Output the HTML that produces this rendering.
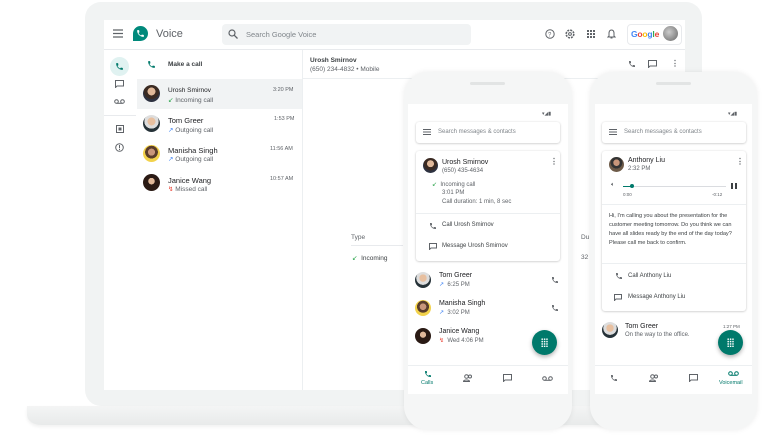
<!DOCTYPE html>
<html><head><meta charset="utf-8"><style>
*{box-sizing:border-box;margin:0;padding:0}
body{width:779px;height:444px;background:#fff;position:relative;overflow:hidden;font-family:"Liberation Sans",Arial,sans-serif;color:#202124}
.a{position:absolute}
.t{font-size:7px;color:#202124;white-space:nowrap}
.s{font-size:6px;color:#5f6368;white-space:nowrap}
.av{position:absolute;border-radius:50%;background:radial-gradient(circle at 50% 38%,#e0b899 0 28%,#3a2a22 30% 55%,#2d3140 57%)}
.ic{position:absolute}
.fab{position:absolute;width:25px;height:25px;border-radius:50%;background:#00796b;box-shadow:0 2px 4px rgba(0,0,0,.3)}
.fab:after{content:"";position:absolute;left:9px;top:8px;width:7px;height:9px;background:radial-gradient(circle,#fff 0.7px,transparent 1px) 0 0/2.4px 2.4px}
.card{position:absolute;background:#fff;border-radius:3px;box-shadow:0 0.5px 2px rgba(0,0,0,.25)}
</style></head><body>
<!-- laptop -->
<div class="a" style="left:85px;top:2px;width:617px;height:404px;background:#f1f3f3;border-radius:16px"></div>
<div class="a" style="left:27px;top:406px;width:700px;height:19px;background:linear-gradient(#f4f5f5,#e8eaea);border-radius:0 0 14px 14px/0 0 10px 10px;box-shadow:0 2px 3px rgba(0,0,0,.06)"></div>
<div class="a" style="left:104px;top:20px;width:581px;height:370px;background:#fff"></div>
<!-- header -->
<div class="a" style="left:104px;top:49px;width:581px;height:1px;background:#e8eaed"></div>
<svg class="ic" style="left:113px;top:29px" width="10" height="9"><path d="M0 1h10M0 4.5h10M0 8h10" stroke="#5f6368" stroke-width="1.3"/></svg>
<div class="a" style="left:133px;top:26px;width:15px;height:15px;border-radius:50% 50% 50% 0;background:#00897b;transform:rotate(0deg)"></div>
<svg class="ic" style="left:136px;top:29px" width="9" height="9" viewBox="0 0 24 24"><path fill="#fff" d="M6.6 10.8c1.4 2.8 3.8 5.1 6.6 6.6l2.2-2.2c.3-.3.7-.4 1-.2 1.1.4 2.3.6 3.6.6.6 0 1 .4 1 1V20c0 .6-.4 1-1 1C10.6 21 3 13.4 3 4c0-.6.4-1 1-1h3.5c.6 0 1 .4 1 1 0 1.3.2 2.5.6 3.6.1.3 0 .7-.2 1L6.6 10.8z"/></svg>
<div class="a" style="left:156px;top:28px;font-size:11px;color:#5f6368">Voice</div>
<div class="a" style="left:222px;top:24px;width:249px;height:21px;background:#f1f3f4;border-radius:4px"></div>
<svg class="ic" style="left:228px;top:29px" width="10" height="10"><circle cx="4" cy="4" r="3" fill="none" stroke="#5f6368" stroke-width="1.2"/><path d="M6.2 6.2L9.5 9.5" stroke="#5f6368" stroke-width="1.3"/></svg>
<div class="a" style="left:246px;top:30px;font-size:7.5px;color:#80868b">Search Google Voice</div>
<svg class="ic" style="left:545px;top:29px" width="10" height="10"><circle cx="5" cy="5" r="4.2" fill="none" stroke="#5f6368" stroke-width="1"/><text x="3" y="7.5" font-size="6" fill="#5f6368" font-family="Liberation Sans">?</text></svg>
<svg class="ic" style="left:565px;top:29px" width="10" height="10"><circle cx="5" cy="5" r="3.8" fill="none" stroke="#5f6368" stroke-width="1.6" stroke-dasharray="2 1"/><circle cx="5" cy="5" r="1.4" fill="none" stroke="#5f6368"/></svg>
<svg class="ic" style="left:587px;top:30px" width="8" height="8"><g fill="#5f6368"><rect x="0" y="0" width="2" height="2"/><rect x="3" y="0" width="2" height="2"/><rect x="6" y="0" width="2" height="2"/><rect x="0" y="3" width="2" height="2"/><rect x="3" y="3" width="2" height="2"/><rect x="6" y="3" width="2" height="2"/><rect x="0" y="6" width="2" height="2"/><rect x="3" y="6" width="2" height="2"/><rect x="6" y="6" width="2" height="2"/></g></svg>
<svg class="ic" style="left:607px;top:29px" width="9" height="10"><path d="M4.5 1C2.5 1 2 3 2 4.5V7L1 8h7L7 7V4.5C7 3 6.5 1 4.5 1z" fill="none" stroke="#5f6368"/><path d="M3.5 9h2" stroke="#5f6368"/></svg>
<div class="a" style="left:627px;top:24px;width:55px;height:21px;border:1px solid #e8eaed;border-radius:4px"></div>
<div class="a" style="left:631px;top:29px;font-size:8.5px;font-weight:bold;letter-spacing:-0.2px"><span style="color:#4285f4">G</span><span style="color:#ea4335">o</span><span style="color:#fbbc05">o</span><span style="color:#4285f4">g</span><span style="color:#34a853">l</span><span style="color:#ea4335">e</span></div>
<div class="a" style="left:663px;top:26px;width:15px;height:15px;border-radius:50%;background:radial-gradient(circle at 40% 40%,#ccc,#666)"></div>
<!-- rail -->
<div class="a" style="left:110px;top:57px;width:19px;height:19px;border-radius:50%;background:#e0f2f1"></div>
<svg class="ic" style="left:115px;top:62px" width="9" height="9" viewBox="0 0 24 24"><path fill="#00796b" d="M6.6 10.8c1.4 2.8 3.8 5.1 6.6 6.6l2.2-2.2c.3-.3.7-.4 1-.2 1.1.4 2.3.6 3.6.6.6 0 1 .4 1 1V20c0 .6-.4 1-1 1C10.6 21 3 13.4 3 4c0-.6.4-1 1-1h3.5c.6 0 1 .4 1 1 0 1.3.2 2.5.6 3.6.1.3 0 .7-.2 1L6.6 10.8z"/></svg>
<svg class="ic" style="left:115px;top:80px" width="9" height="8"><path d="M0.5 0.5h8v5.5H2L0.5 7.5z" fill="none" stroke="#5f6368"/></svg>
<svg class="ic" style="left:114px;top:99px" width="11" height="5"><circle cx="2.5" cy="2.5" r="1.8" fill="none" stroke="#5f6368"/><circle cx="8.5" cy="2.5" r="1.8" fill="none" stroke="#5f6368"/><path d="M2.5 4.3h6" stroke="#5f6368"/></svg>
<div class="a" style="left:104px;top:115px;width:32px;height:1px;background:#e8eaed"></div>
<svg class="ic" style="left:116px;top:125px" width="8" height="8"><rect x="0.5" y="0.5" width="7" height="7" fill="none" stroke="#5f6368"/><rect x="2.5" y="2.5" width="3" height="3" fill="#5f6368"/></svg>
<svg class="ic" style="left:115px;top:143px" width="9" height="9"><circle cx="4.5" cy="4.5" r="3.8" fill="none" stroke="#5f6368"/><path d="M4.5 2v3.2M4.5 6v1" stroke="#5f6368"/></svg>
<!-- list -->
<svg class="ic" style="left:147px;top:60px" width="9" height="9" viewBox="0 0 24 24"><path fill="#00796b" d="M6.6 10.8c1.4 2.8 3.8 5.1 6.6 6.6l2.2-2.2c.3-.3.7-.4 1-.2 1.1.4 2.3.6 3.6.6.6 0 1 .4 1 1V20c0 .6-.4 1-1 1C10.6 21 3 13.4 3 4c0-.6.4-1 1-1h3.5c.6 0 1 .4 1 1 0 1.3.2 2.5.6 3.6.1.3 0 .7-.2 1L6.6 10.8z"/></svg>
<div class="a t" style="left:168px;top:61px;font-size:6.5px;font-weight:bold;color:#3c4043">Make a call</div>
<div class="a" style="left:137px;top:79px;width:165px;height:30px;background:#f1f3f4"></div>
<div class="a" style="left:302px;top:50px;width:1px;height:340px;background:#eceff1"></div>
<div class="av" style="left:143px;top:85px;width:17px;height:17px"></div>
<div class="a t" style="left:168px;top:87px;font-size:6.5px">Urosh Smirnov</div>
<div class="a s" style="left:168px;top:96px;font-size:6.5px"><span style="color:#34a853">↙</span> Incoming call</div>
<div class="a s" style="left:273px;top:87px;font-size:5.5px">3:20 PM</div>
<div class="av" style="left:143px;top:115px;width:17px;height:17px;background:radial-gradient(circle at 50% 38%,#e8c0a0 0 28%,#ddd 30% 52%,#263238 54%)"></div>
<div class="a t" style="left:168px;top:116px;font-size:7.5px">Tom Greer</div>
<div class="a s" style="left:168px;top:126px;font-size:6.5px"><span style="color:#4285f4">↗</span> Outgoing call</div>
<div class="a s" style="left:274px;top:116px;font-size:5.5px">1:53 PM</div>
<div class="av" style="left:143px;top:145px;width:17px;height:17px;background:radial-gradient(circle at 50% 42%,#c9967a 0 26%,#5a3d2b 28% 48%,#f2d24b 50%)"></div>
<div class="a t" style="left:168px;top:146px;font-size:7.5px">Manisha Singh</div>
<div class="a s" style="left:168px;top:155px;font-size:6.5px"><span style="color:#4285f4">↗</span> Outgoing call</div>
<div class="a s" style="left:270px;top:146px;font-size:5.5px">11:56 AM</div>
<div class="av" style="left:143px;top:174px;width:17px;height:17px;background:radial-gradient(circle at 50% 42%,#e0b899 0 24%,#2a1a14 26%)"></div>
<div class="a t" style="left:168px;top:176px;font-size:7.5px">Janice Wang</div>
<div class="a s" style="left:168px;top:185px;font-size:6.5px"><span style="color:#ea4335">↯</span> Missed call</div>
<div class="a s" style="left:270px;top:176px;font-size:5.5px">10:57 AM</div>
<!-- detail -->
<div class="a t" style="left:310px;top:57px;font-size:6.5px;font-weight:bold;color:#3c4043">Urosh Smirnov</div>
<div class="a s" style="left:310px;top:66px;font-size:6.5px">(650) 234-4832 • Mobile</div>
<div class="a" style="left:302px;top:78px;width:383px;height:1px;background:#eceff1"></div>
<svg class="ic" style="left:628px;top:60px" width="8" height="8" viewBox="0 0 24 24"><path fill="#5f6368" d="M6.6 10.8c1.4 2.8 3.8 5.1 6.6 6.6l2.2-2.2c.3-.3.7-.4 1-.2 1.1.4 2.3.6 3.6.6.6 0 1 .4 1 1V20c0 .6-.4 1-1 1C10.6 21 3 13.4 3 4c0-.6.4-1 1-1h3.5c.6 0 1 .4 1 1 0 1.3.2 2.5.6 3.6.1.3 0 .7-.2 1L6.6 10.8z"/></svg>
<svg class="ic" style="left:648px;top:60px" width="9" height="8"><path d="M0.5 0.5h8v5.5H2L0.5 7.5z" fill="none" stroke="#5f6368"/></svg>
<div class="a" style="left:671px;top:59px;font-size:8px;color:#5f6368;font-weight:bold">⋮</div>
<div class="a s" style="left:351px;top:234px;font-size:6.5px">Type</div>
<div class="a" style="left:351px;top:245px;width:52px;height:1px;background:#e8eaed"></div>
<div class="a s" style="left:352px;top:254px;font-size:6.5px;color:#3c4043"><span style="color:#34a853">↙</span>&nbsp; Incoming</div>
<div class="a s" style="left:581px;top:234px;font-size:6.5px">Du</div>
<div class="a s" style="left:581px;top:254px;font-size:6.5px">32</div>

<!-- phone 1 -->
<div class="a" style="left:404px;top:72px;width:168px;height:358px;background:#f5f6f6;border-radius:24px;box-shadow:0 0 6px rgba(0,0,0,.08)"></div>
<div class="a" style="left:470px;top:82px;width:35px;height:3px;border-radius:2px;background:#e2e4e4"></div>
<div class="a" style="left:408px;top:104px;width:160px;height:290px;background:#fff"></div>
<div class="a" style="left:542px;top:111px;font-size:5px;color:#5f6368">▾◢▮</div>
<div class="card" style="left:416px;top:122px;width:144px;height:21px"></div>
<svg class="ic" style="left:423px;top:129px" width="8" height="6"><path d="M0 .5h8M0 3h8M0 5.5h8" stroke="#5f6368"/></svg>
<div class="a s" style="left:438px;top:129px;color:#80868b">Search messages &amp; contacts</div>
<div class="card" style="left:416px;top:151px;width:144px;height:110px"></div>
<div class="av" style="left:423px;top:158px;width:15px;height:15px"></div>
<div class="a t" style="left:442px;top:159px">Urosh Smirnov</div>
<div class="a s" style="left:442px;top:168px">(650) 435-4634</div>
<div class="a" style="left:550px;top:157px;font-size:8px;color:#5f6368;font-weight:bold">⋮</div>
<div class="a s" style="left:432px;top:181px"><span style="color:#34a853">↙</span>&nbsp; Incoming call</div>
<div class="a s" style="left:442px;top:190px">3:01 PM</div>
<div class="a s" style="left:442px;top:199px">Call duration: 1 min, 8 sec</div>
<div class="a" style="left:416px;top:213px;width:144px;height:1px;background:#eceff1"></div>
<svg class="ic" style="left:429px;top:222px" width="8" height="8" viewBox="0 0 24 24"><path fill="#5f6368" d="M6.6 10.8c1.4 2.8 3.8 5.1 6.6 6.6l2.2-2.2c.3-.3.7-.4 1-.2 1.1.4 2.3.6 3.6.6.6 0 1 .4 1 1V20c0 .6-.4 1-1 1C10.6 21 3 13.4 3 4c0-.6.4-1 1-1h3.5c.6 0 1 .4 1 1 0 1.3.2 2.5.6 3.6.1.3 0 .7-.2 1L6.6 10.8z"/></svg>
<div class="a t" style="left:442px;top:222px;font-size:6px;color:#3c4043">Call Urosh Smirnov</div>
<svg class="ic" style="left:429px;top:243px" width="8" height="7"><path d="M0.5 0.5h7v4.5H2L0.5 6.5z" fill="none" stroke="#5f6368"/></svg>
<div class="a t" style="left:442px;top:243px;font-size:6px;color:#3c4043">Message Urosh Smirnov</div>
<div class="av" style="left:415px;top:272px;width:16px;height:16px;background:radial-gradient(circle at 50% 38%,#e8c0a0 0 28%,#ddd 30% 52%,#263238 54%)"></div>
<div class="a t" style="left:439px;top:272px">Tom Greer</div>
<div class="a s" style="left:439px;top:281px"><span style="color:#4285f4">↗</span>&nbsp; 6:25 PM</div>
<div class="av" style="left:415px;top:300px;width:16px;height:16px;background:radial-gradient(circle at 50% 42%,#c9967a 0 26%,#5a3d2b 28% 48%,#f2d24b 50%)"></div>
<div class="a t" style="left:439px;top:300px">Manisha Singh</div>
<div class="a s" style="left:439px;top:309px"><span style="color:#4285f4">↗</span>&nbsp; 3:02 PM</div>
<div class="av" style="left:415px;top:328px;width:16px;height:16px;background:radial-gradient(circle at 50% 42%,#e0b899 0 24%,#2a1a14 26%)"></div>
<div class="a t" style="left:439px;top:328px">Janice Wang</div>
<div class="a s" style="left:439px;top:337px"><span style="color:#ea4335">↯</span>&nbsp; Wed 4:06 PM</div>
<svg class="ic" style="left:551px;top:276px" width="8" height="8" viewBox="0 0 24 24"><path fill="#5f6368" d="M6.6 10.8c1.4 2.8 3.8 5.1 6.6 6.6l2.2-2.2c.3-.3.7-.4 1-.2 1.1.4 2.3.6 3.6.6.6 0 1 .4 1 1V20c0 .6-.4 1-1 1C10.6 21 3 13.4 3 4c0-.6.4-1 1-1h3.5c.6 0 1 .4 1 1 0 1.3.2 2.5.6 3.6.1.3 0 .7-.2 1L6.6 10.8z"/></svg>
<svg class="ic" style="left:551px;top:304px" width="8" height="8" viewBox="0 0 24 24"><path fill="#5f6368" d="M6.6 10.8c1.4 2.8 3.8 5.1 6.6 6.6l2.2-2.2c.3-.3.7-.4 1-.2 1.1.4 2.3.6 3.6.6.6 0 1 .4 1 1V20c0 .6-.4 1-1 1C10.6 21 3 13.4 3 4c0-.6.4-1 1-1h3.5c.6 0 1 .4 1 1 0 1.3.2 2.5.6 3.6.1.3 0 .7-.2 1L6.6 10.8z"/></svg>
<div class="fab" style="left:532px;top:330px"></div>
<div class="a" style="left:408px;top:365px;width:160px;height:1px;background:#eceff1"></div>
<svg class="ic" style="left:424px;top:370px" width="8" height="8" viewBox="0 0 24 24"><path fill="#00796b" d="M6.6 10.8c1.4 2.8 3.8 5.1 6.6 6.6l2.2-2.2c.3-.3.7-.4 1-.2 1.1.4 2.3.6 3.6.6.6 0 1 .4 1 1V20c0 .6-.4 1-1 1C10.6 21 3 13.4 3 4c0-.6.4-1 1-1h3.5c.6 0 1 .4 1 1 0 1.3.2 2.5.6 3.6.1.3 0 .7-.2 1L6.6 10.8z"/></svg>
<div class="a" style="left:421px;top:380px;font-size:5.5px;color:#00796b">Calls</div>
<svg class="ic" style="left:463px;top:374px" width="10" height="8"><circle cx="3.5" cy="2.5" r="1.8" fill="none" stroke="#5f6368"/><circle cx="7" cy="2.5" r="1.5" fill="none" stroke="#5f6368"/><path d="M0.5 7.5c0-2 6-2 6 0z" fill="none" stroke="#5f6368"/></svg>
<svg class="ic" style="left:503px;top:374px" width="9" height="8"><path d="M0.5 0.5h8v5.5H2L0.5 7.5z" fill="none" stroke="#5f6368"/></svg>
<svg class="ic" style="left:542px;top:376px" width="11" height="5"><circle cx="2.5" cy="2.5" r="1.8" fill="none" stroke="#5f6368"/><circle cx="8.5" cy="2.5" r="1.8" fill="none" stroke="#5f6368"/><path d="M2.5 4.3h6" stroke="#5f6368"/></svg>

<!-- phone 2 -->
<div class="a" style="left:590px;top:72px;width:167px;height:358px;background:#f5f6f6;border-radius:24px;box-shadow:0 0 6px rgba(0,0,0,.08)"></div>
<div class="a" style="left:656px;top:82px;width:35px;height:3px;border-radius:2px;background:#e2e4e4"></div>
<div class="a" style="left:595px;top:104px;width:157px;height:290px;background:#fff"></div>
<div class="a" style="left:728px;top:111px;font-size:5px;color:#5f6368">▾◢▮</div>
<div class="card" style="left:602px;top:122px;width:144px;height:21px"></div>
<svg class="ic" style="left:609px;top:129px" width="8" height="6"><path d="M0 .5h8M0 3h8M0 5.5h8" stroke="#5f6368"/></svg>
<div class="a s" style="left:624px;top:129px;color:#80868b">Search messages &amp; contacts</div>
<div class="card" style="left:602px;top:151px;width:144px;height:160px"></div>
<div class="av" style="left:609px;top:157px;width:15px;height:15px;background:radial-gradient(circle at 50% 38%,#c9967a 0 26%,#333 28% 48%,#6d5a48 50%)"></div>
<div class="a t" style="left:628px;top:157px">Anthony Liu</div>
<div class="a s" style="left:628px;top:166px">2:32 PM</div>
<div class="a" style="left:736px;top:157px;font-size:8px;color:#5f6368;font-weight:bold">⋮</div>
<div class="a s" style="left:611px;top:182px;font-size:6px">🔈︎</div>
<div class="a" style="left:623px;top:186px;width:103px;height:1px;background:#dadce0"></div>
<div class="a" style="left:623px;top:186px;width:9px;height:1px;background:#00796b"></div>
<div class="a" style="left:630px;top:184px;width:4px;height:4px;border-radius:50%;background:#00796b"></div>
<div class="a" style="left:731px;top:183px;width:2px;height:6px;background:#3c4043"></div>
<div class="a" style="left:735px;top:183px;width:2px;height:6px;background:#3c4043"></div>
<div class="a s" style="left:623px;top:192px;font-size:4.5px">0:00</div>
<div class="a s" style="left:712px;top:192px;font-size:4.5px">-0:12</div>
<div class="a" style="left:602px;top:204px;width:144px;height:1px;background:#eceff1"></div>
<div class="a" style="left:609px;top:212px;width:132px;font-size:5.6px;line-height:8.9px;color:#3c4043">Hi, I'm calling you about the presentation for the customer meeting tomorrow. Do you think we can have all slides ready by the end of the day today? Please call me back to confirm.</div>
<div class="a" style="left:602px;top:263px;width:144px;height:1px;background:#eceff1"></div>
<svg class="ic" style="left:615px;top:272px" width="8" height="8" viewBox="0 0 24 24"><path fill="#5f6368" d="M6.6 10.8c1.4 2.8 3.8 5.1 6.6 6.6l2.2-2.2c.3-.3.7-.4 1-.2 1.1.4 2.3.6 3.6.6.6 0 1 .4 1 1V20c0 .6-.4 1-1 1C10.6 21 3 13.4 3 4c0-.6.4-1 1-1h3.5c.6 0 1 .4 1 1 0 1.3.2 2.5.6 3.6.1.3 0 .7-.2 1L6.6 10.8z"/></svg>
<div class="a t" style="left:628px;top:273px;font-size:6px;color:#3c4043">Call Anthony Liu</div>
<svg class="ic" style="left:614px;top:294px" width="8" height="7"><path d="M0.5 0.5h7v4.5H2L0.5 6.5z" fill="none" stroke="#5f6368"/></svg>
<div class="a t" style="left:628px;top:294px;font-size:6px;color:#3c4043">Message Anthony Liu</div>
<div class="av" style="left:602px;top:322px;width:16px;height:16px;background:radial-gradient(circle at 50% 38%,#e8c0a0 0 28%,#ddd 30% 52%,#263238 54%)"></div>
<div class="a t" style="left:625px;top:323px">Tom Greer</div>
<div class="a s" style="left:625px;top:332px">On the way to the office.</div>
<div class="a s" style="left:723px;top:324px;font-size:4.5px">1:27 PM</div>
<div class="fab" style="left:718px;top:330px"></div>
<div class="a" style="left:595px;top:365px;width:157px;height:1px;background:#eceff1"></div>
<svg class="ic" style="left:610px;top:374px" width="8" height="8" viewBox="0 0 24 24"><path fill="#5f6368" d="M6.6 10.8c1.4 2.8 3.8 5.1 6.6 6.6l2.2-2.2c.3-.3.7-.4 1-.2 1.1.4 2.3.6 3.6.6.6 0 1 .4 1 1V20c0 .6-.4 1-1 1C10.6 21 3 13.4 3 4c0-.6.4-1 1-1h3.5c.6 0 1 .4 1 1 0 1.3.2 2.5.6 3.6.1.3 0 .7-.2 1L6.6 10.8z"/></svg>
<svg class="ic" style="left:649px;top:374px" width="10" height="8"><circle cx="3.5" cy="2.5" r="1.8" fill="none" stroke="#5f6368"/><circle cx="7" cy="2.5" r="1.5" fill="none" stroke="#5f6368"/><path d="M0.5 7.5c0-2 6-2 6 0z" fill="none" stroke="#5f6368"/></svg>
<svg class="ic" style="left:689px;top:374px" width="9" height="8"><path d="M0.5 0.5h8v5.5H2L0.5 7.5z" fill="none" stroke="#5f6368"/></svg>
<svg class="ic" style="left:728px;top:371px" width="11" height="5"><circle cx="2.5" cy="2.5" r="1.8" fill="none" stroke="#00796b"/><circle cx="8.5" cy="2.5" r="1.8" fill="none" stroke="#00796b"/><path d="M2.5 4.3h6" stroke="#00796b"/></svg>
<div class="a" style="left:719px;top:380px;font-size:5.5px;color:#00796b">Voicemail</div>
</body></html>
